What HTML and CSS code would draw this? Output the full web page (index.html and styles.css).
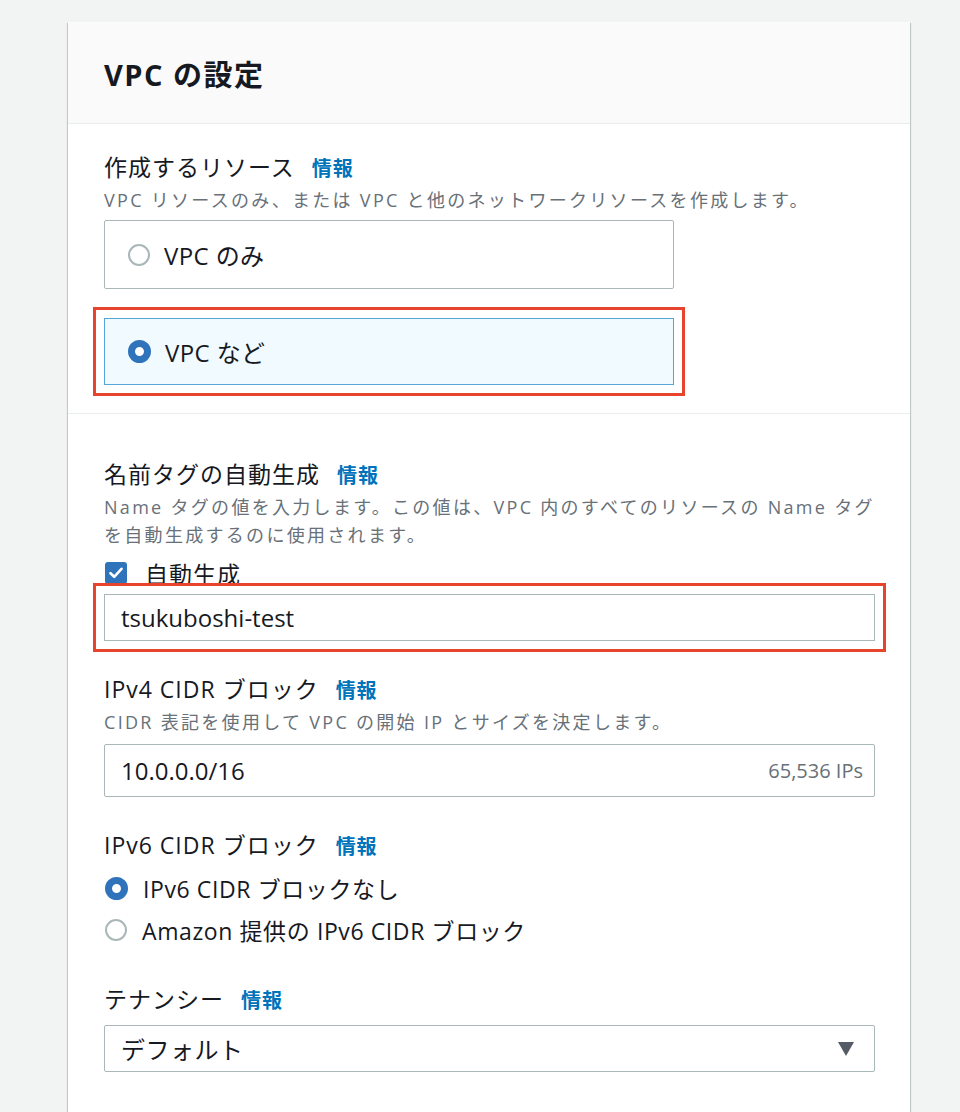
FILE: index.html
```html
<!DOCTYPE html>
<html lang="ja">
<head>
    <meta charset="UTF-8">
    <meta name="viewport" content="width=device-width, initial-scale=1.0">
    <title>VPC の設定</title>
    <link rel="stylesheet" href="styles.css">
</head>
<body>
    <div class="card">
        <div class="card-header">
            <h2>VPC の設定</h2>
        </div>

        <div class="section">
            <div class="label">作成するリソース <a href="#" class="info">情報</a></div>
            <div class="desc">VPC リソースのみ、または VPC と他のネットワークリソースを作成します。</div>
            <div class="tiles">
                <label class="tile">
                    <span class="radio"></span>
                    <span>VPC のみ</span>
                </label>
                <label class="tile tile-selected mark">
                    <span class="radio radio-on"></span>
                    <span>VPC など</span>
                </label>
            </div>
        </div>

        <div class="section section-main">
            <div class="field">
                <div class="label">名前タグの自動生成 <a href="#" class="info">情報</a></div>
                <div class="desc">Name タグの値を入力します。この値は、VPC 内のすべてのリソースの Name タグを自動生成するのに使用されます。</div>
                <label class="check-row">
                    <span class="checkbox">
                        <svg width="14" height="12" viewBox="0 0 14 12"><path d="M1.5 6.2 5.2 9.8 12.5 1.8" fill="none" stroke="#fff" stroke-width="2.6" stroke-linecap="round" stroke-linejoin="round"/></svg>
                    </span>
                    <span>自動生成</span>
                </label>
                <div class="input input-name mark">tsukuboshi-test</div>
            </div>

            <div class="field">
                <div class="label">IPv4 CIDR ブロック <a href="#" class="info">情報</a></div>
                <div class="desc">CIDR 表記を使用して VPC の開始 IP とサイズを決定します。</div>
                <div class="input input-cidr">
                    <span>10.0.0.0/16</span>
                    <span class="hint">65,536 IPs</span>
                </div>
            </div>

            <div class="field">
                <div class="label">IPv6 CIDR ブロック <a href="#" class="info">情報</a></div>
                <div class="options">
                    <label class="option"><span class="radio radio-on"></span>IPv6 CIDR ブロックなし</label>
                    <label class="option"><span class="radio"></span>Amazon 提供の IPv6 CIDR ブロック</label>
                </div>
            </div>

            <div class="field">
                <div class="label">テナンシー <a href="#" class="info">情報</a></div>
                <div class="input select">
                    <span>デフォルト</span>
                    <span class="caret"></span>
                </div>
            </div>
        </div>
    </div>
</body>
</html>
```

FILE: styles.css
```css
body {
    margin: 0;
    padding-top: 22px;
    background: #f2f3f3;
    font-family: "Open Sans", "Noto Sans CJK JP", sans-serif;
    color: #16191f;
    min-height: 1090px;
}

.card {
    margin-left: 68px;
    width: 842px;
    min-height: 1100px;
    background: #fff;
    box-shadow: 0 1px 1px rgba(0, 28, 36, 0.3), 1px 1px 1px rgba(0, 28, 36, 0.15), -1px 1px 1px rgba(0, 28, 36, 0.15);
}

.card-header {
    height: 101px;
    padding: 0 35px 0 36px;
    display: flex;
    align-items: center;
    background: #fafafa;
    border-bottom: 1px solid #eaeded;
}

.card-header h2 {
    margin: 0;
    font-size: 29px;
    font-weight: 700;
    letter-spacing: 1.5px;
}

.section {
    padding: 28px 35px 28px 36px;
    border-bottom: 1px solid #eaeded;
}

.section-main {
    padding-top: 45px;
    border-bottom: none;
}

.label {
    height: 30px;
    font-size: 23px;
    line-height: 30px;
    letter-spacing: 1px;
}

.info {
    margin-left: 10px;
    color: #0073bb;
    font-size: 20px;
    line-height: 1;
    font-weight: 700;
    letter-spacing: 1px;
    text-decoration: none;
}

.desc {
    margin-top: 4px;
    font-size: 18px;
    line-height: 28px;
    letter-spacing: 2.3px;
    color: #687078;
}

.tiles {
    margin-top: 6px;
    width: 570px;
    display: flex;
    flex-direction: column;
    gap: 29px;
}

.tile {
    height: 67px;
    padding-left: 23px;
    display: flex;
    align-items: center;
    gap: 14px;
    border: 1px solid #aab7b8;
    border-radius: 2px;
    font-size: 24px;
    letter-spacing: 0.4px;
}

.tile-selected {
    height: 65px;
    background: #f1faff;
    border-color: #55a6d8;
}

.radio {
    flex: none;
    width: 18px;
    height: 18px;
    border: 2px solid #aab7b8;
    border-radius: 50%;
    background: #fff;
}

.radio-on {
    border: 7px solid #2f73ba;
    width: 9px;
    height: 9px;
}

.field + .field {
    margin-top: 33px;
}

.check-row {
    margin-top: 10px;
    height: 28px;
    display: flex;
    align-items: center;
    gap: 18px;
    font-size: 23px;
    letter-spacing: 1px;
}

.checkbox {
    width: 22px;
    height: 22px;
    margin-left: 1px;
    border-radius: 3px;
    background: #2f73ba;
    display: flex;
    align-items: center;
    justify-content: center;
}

.input {
    box-sizing: border-box;
    width: 771px;
    display: flex;
    align-items: center;
    justify-content: space-between;
    padding: 0 15px 0 16px;
    border: 1px solid #aab7b8;
    border-radius: 2px;
    font-size: 24px;
    background: #fff;
}

.input-name {
    margin-top: 7px;
    height: 47px;
}

.input-cidr {
    margin-top: 8px;
    height: 53px;
    padding-right: 11px;
}

.hint {
    color: #687078;
    font-size: 20px;
}

.options {
    margin-top: 7px;
}

.option {
    height: 42px;
    display: flex;
    align-items: center;
    gap: 15px;
    font-size: 23px;
    letter-spacing: 0.6px;
}

.option .radio {
    margin-left: 1px;
}

.select {
    margin-top: 11px;
    height: 47px;
    letter-spacing: 0.5px;
    padding-right: 20px;
}

.caret {
    width: 0;
    height: 0;
    border-left: 8px solid transparent;
    border-right: 8px solid transparent;
    border-top: 14px solid #545b64;
}

/* red highlight frame around an element */
.mark {
    border-radius: 0;
    outline: 3px solid #e8432c;
    outline-offset: 8px;
}
```
